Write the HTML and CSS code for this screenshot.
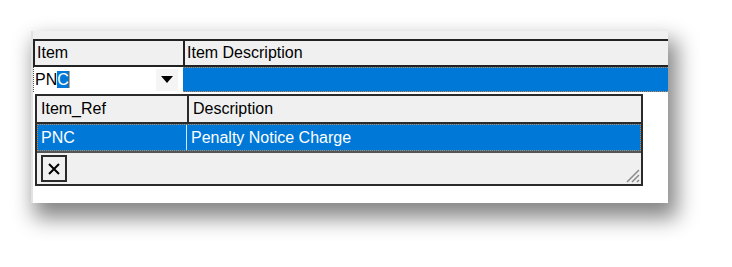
FILE: index.html
```html
<!DOCTYPE html>
<html lang="en">
  <head>
    <meta charset="UTF-8" />
    <title>Item lookup</title>
    <link rel="stylesheet" href="styles.css">
  </head>
  <body>
    <div class="frame">
      <div class="grid-head">
        <div class="cell col-item">Item</div>
        <div class="cell col-desc">Item Description</div>
      </div>
      <div class="edit-row">
        <div class="edit-cell">
          <span class="typed">PN<span class="sel">C</span></span>
          <span class="drop">
            <svg width="12" height="7" viewBox="0 0 12 7"><path d="M0 0H12L6 7Z" fill="#000"/></svg>
          </span>
        </div>
        <div class="edit-desc"></div>
      </div>
      <div class="popup">
        <div class="pop-head">
          <div class="pcell pcol-ref">Item_Ref</div>
          <div class="pcell pcol-desc">Description</div>
        </div>
        <div class="pop-row">
          <div class="pcell pcol-ref">PNC</div>
          <div class="pcell pcol-desc">Penalty Notice Charge</div>
        </div>
        <div class="pop-foot">
          <div class="close-btn">
            <svg width="14" height="14" viewBox="0 0 14 14"><path d="M2 2L12 12M12 2L2 12" stroke="#000" stroke-width="2"/></svg>
          </div>
          <svg class="grip" width="18" height="18" viewBox="0 0 18 18">
            <path d="M17 5L5 17M17 10L10 17M17 15L15 17" stroke="#8a8a8a" stroke-width="1.5"/>
          </svg>
        </div>
      </div>
    </div>
  </body>
</html>
```

FILE: styles.css
```css
html,
body {
  margin: 0;
  padding: 0;
  min-height: 267px;
  background: #fff;
}
body {
  font-family: "Liberation Sans", Arial, sans-serif;
  font-size: 16px;
  color: #000;
  padding-top: 31px;
  box-sizing: border-box;
}
.frame {
  margin-left: 31px;
  width: 637px;
  height: 172px;
  box-sizing: border-box;
  padding-top: 8px;
  background: linear-gradient(#f0f0f0 0, #f0f0f0 8px, #fff 8px);
  border-left: 2px solid #e2e2e2;
  box-shadow: 6px 12px 20px 3px rgba(0, 0, 0, 0.48);
}
.grid-head {
  display: flex;
  height: 28px;
  box-sizing: border-box;
  background: #f0f0f0;
  border-top: 2px solid #222;
  border-bottom: 2px solid #222;
  border-left: 2px solid #222;
}
.cell {
  display: flex;
  align-items: center;
  padding-left: 2px;
}
.col-item {
  width: 146px;
  border-right: 2px solid #222;
}
.col-desc {
  flex: 1;
}
.edit-row {
  display: flex;
  height: 25px;
}
.edit-cell {
  width: 150px;
  box-sizing: border-box;
  display: flex;
  align-items: center;
  justify-content: space-between;
  background: #fff;
  border-left: 1px dotted #555;
  padding-left: 1px;
}
.sel {
  background: #0078d7;
  color: #fff;
  box-shadow: 1px 0 0 #e0a060;
}
.drop {
  width: 22px;
  height: 22px;
  margin-right: 5px;
  display: flex;
  align-items: center;
  justify-content: center;
  background: #f5f5f5;
}
.edit-desc {
  flex: 1;
  background: #0078d7;
  border-top: 1px dotted #c8894a;
  border-bottom: 1px dotted #c8894a;
}
.popup {
  margin: 2px 0 0 2px;
  width: 608px;
  height: 92px;
  box-sizing: border-box;
  border: 2px solid #2a2a2a;
  display: flex;
  flex-direction: column;
}
.pop-head {
  display: flex;
  height: 26px;
  background: #f0f0f0;
  border-bottom: 2px solid #2a2a2a;
}
.pcell {
  display: flex;
  align-items: center;
  padding-left: 4px;
}
.pcol-ref {
  width: 146px;
  border-right: 2px solid #2a2a2a;
}
.pcol-desc {
  flex: 1;
}
.pop-row {
  display: flex;
  height: 27px;
  box-sizing: border-box;
  background: #0078d7;
  color: #fff;
  border: 1px dotted #c8894a;
}
.pop-row .pcol-ref {
  width: 145px;
  border-right: 1px solid #d8e8f5;
  padding-left: 3px;
}
.pop-foot {
  flex: 1;
  display: flex;
  align-items: center;
  justify-content: space-between;
  background: #f0f0f0;
  border-top: 2px solid #555;
  padding-left: 4px;
}
.close-btn {
  width: 26px;
  height: 27px;
  box-sizing: border-box;
  border: 2px solid #2a2a2a;
  display: flex;
  align-items: center;
  justify-content: center;
}
.grip {
  align-self: flex-end;
  margin: 0 1px 1px 0;
}
```
